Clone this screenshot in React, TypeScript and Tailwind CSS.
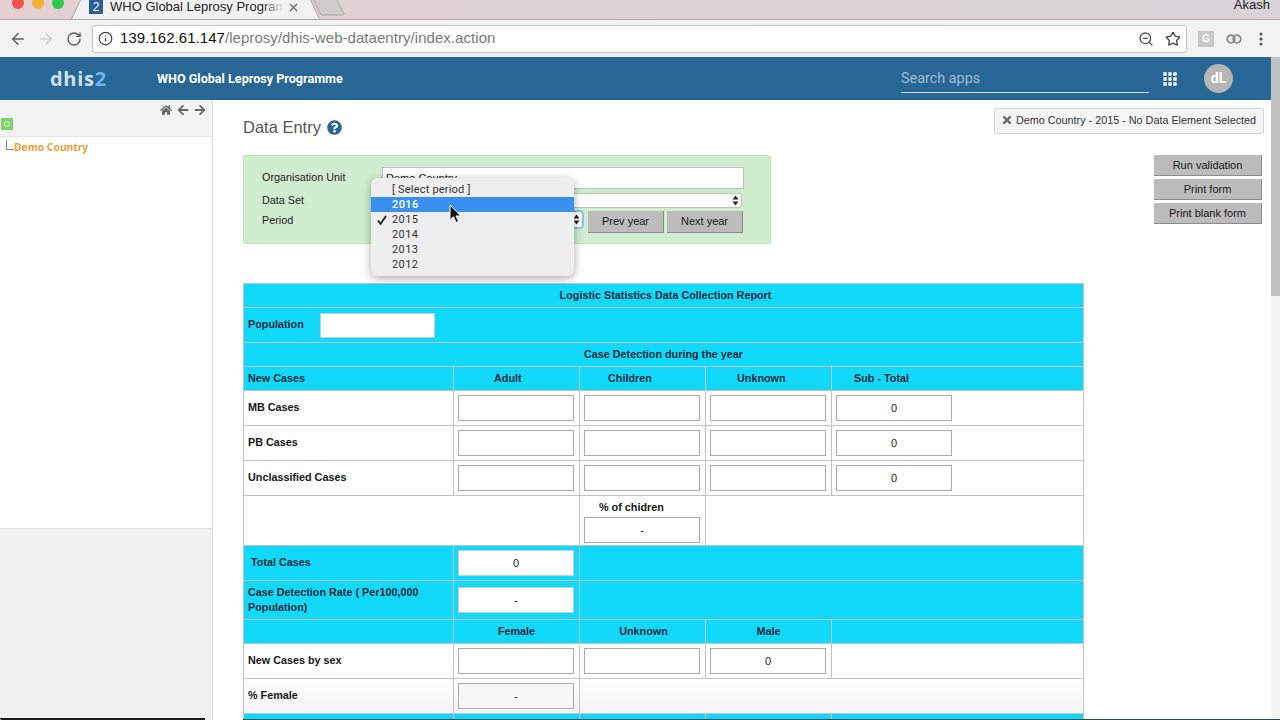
import { ArrowLeft, ArrowRight, Info, RotateCw, Star, X, ZoomOut } from "lucide-react";
import { FaArrowLeft, FaArrowRight, FaHome, FaQuestionCircle, FaTimes } from "react-icons/fa";
import { MdApps } from "react-icons/md";

const cyan = "bg-[#12d9fa]";
const cell = "border border-[#bfc4c6] px-[4px] py-0";
const head = "text-center text-[#0d2a3a]";
// the 35px rows sit their label one pixel above the middle
const rowLabel = "pb-[2px]";

const Field = ({ value = "", onCyan = false }: { value?: string; onCyan?: boolean }) => (
  <input
    readOnly
    value={value}
    className={`block h-[26px] w-[116px] border bg-white text-center text-[11px] font-normal text-[#222] outline-none ${
      onCyan ? "border-[#c4cdd0]" : "border-[#aaaaaa]"
    }`}
  />
);

const CaseRow = ({ label }: { label: string }) => (
  <tr className="h-[35px]">
    <td className={`${cell} ${rowLabel}`}>{label}</td>
    <td className={cell}><Field /></td>
    <td className={cell}><Field /></td>
    <td className={cell}><Field /></td>
    <td className={cell}><Field value="0" /></td>
  </tr>
);

const Updown = () => (
  <svg width="7" height="11" viewBox="0 0 7 11" className="shrink-0">
    <path d="M3.5 0.5 L6.5 4.5 H0.5 Z M3.5 10.5 L6.5 6.5 H0.5 Z" fill="#222" />
  </svg>
);

const GreyButton = ({ label, className }: { label: string; className: string }) => (
  <button className={`border-r border-b border-[#8c8c8c] bg-[#bcbcbc] text-[11px] text-[#1a1a1a] ${className}`}>
    {label}
  </button>
);

const years = ["2015", "2014", "2013", "2012"];

function BrowserChrome() {
  return (
    <div className="shrink-0 font-['Liberation_Sans',sans-serif]">
      <div className="relative h-[20px] overflow-hidden border-b border-[#b0a9ab] bg-gradient-to-r from-[#e3cfd1] via-[#ddd2d4] to-[#d8d4d7]">
        <div className="flex items-start gap-[8px] pl-[12px] -mt-[3px]">
          <span className="h-[12px] w-[12px] rounded-full bg-[#f4504c]" />
          <span className="h-[12px] w-[12px] rounded-full bg-[#f6b13a]" />
          <span className="h-[12px] w-[12px] rounded-full bg-[#2fc84a]" />
        </div>
        <svg width="290" height="20" viewBox="0 0 290 20" className="absolute left-[70px] top-0">
          <path d="M243 -1 H266 L274 13.5 Q274.5 15 272 15 H251 Z" fill="#d0cccd" stroke="#a9a5a7" />
          <path d="M1 20 L11 -1 H240 L250 20 Z" fill="#f2f2f2" />
          <path d="M1 20 L11 -1 M240 -1 L250 20" fill="none" stroke="#aaa5a7" />
        </svg>
        <div className="absolute left-[89px] top-0 flex h-[14px] items-center">
          <span className="flex h-[14px] w-[14px] items-center justify-center bg-[#2a5f95] text-[12px] text-white">2</span>
          <span className="relative ml-[7px] w-[174px] overflow-hidden whitespace-nowrap text-[13px] leading-[14px] text-[#222]">
            WHO Global Leprosy Programme
            <span className="absolute right-0 top-0 h-[14px] w-[22px] bg-gradient-to-r from-transparent to-[#f2f2f2]" />
          </span>
          <X size={13} strokeWidth={2.4} className="ml-[3px] text-[#666]" />
        </div>
        <span className="absolute right-[10px] -top-[5px] text-[13px] text-[#222]">Akash</span>
      </div>
      <div className="flex h-[37px] items-center bg-[#f2f2f2]">
        <ArrowLeft size={18} className="ml-[9px] text-[#5f5f5f]" />
        <ArrowRight size={18} className="ml-[10px] text-[#cfcfcf]" />
        <RotateCw size={16} className="ml-[11px] text-[#5f5f5f]" />
        <div className="ml-[10px] flex h-[28px] w-[1095px] items-center rounded-[3px] border border-[#c6c6c6] bg-white">
          <Info size={15} className="ml-[5px] text-[#444]" />
          <span className="ml-[7px] text-[15px] tracking-[0.05px] text-[#111]">
            139.162.61.147<span className="text-[#7a7a7a]">/leprosy/dhis-web-dataentry/index.action</span>
          </span>
          <ZoomOut size={16} className="ml-auto text-[#555]" />
          <Star size={16} className="ml-[11px] mr-[5px] text-[#444]" />
        </div>
        <span className="ml-[11px] flex h-[16px] w-[16px] items-center justify-center bg-[#c9c9c9] text-[10px] font-bold text-white">G</span>
        <svg width="16" height="10" viewBox="0 0 16 10" className="ml-[12px]">
          <circle cx="5" cy="5" r="3.8" fill="none" stroke="#8a8a8a" strokeWidth="1.8" />
          <circle cx="11" cy="5" r="3.8" fill="none" stroke="#8a8a8a" strokeWidth="1.8" />
        </svg>
        <svg width="4" height="14" viewBox="0 0 4 14" className="ml-[17px]">
          <circle cx="2" cy="2" r="1.5" fill="#555" />
          <circle cx="2" cy="7" r="1.5" fill="#555" />
          <circle cx="2" cy="12" r="1.5" fill="#555" />
        </svg>
      </div>
    </div>
  );
}

function TopBar() {
  return (
    <div className="flex h-[43px] items-center bg-[#276695] font-['Roboto',sans-serif]">
      <span className="ml-[50px] w-[107px] font-['Open_Sans',sans-serif] text-[20px] font-bold tracking-[0.7px] text-[#cfe0ec]">
        dhis<span className="text-[#6fb4e8]">2</span>
      </span>
      <span className="pt-[1px] text-[12.6px] font-bold text-white">WHO Global Leprosy Programme</span>
      <div className="ml-auto flex h-[29px] w-[248px] items-center border-b border-[#c9dbe8] pt-[2px] text-[14.4px] text-[#9dbdd6]">
        Search apps
      </div>
      <MdApps size={20} className="ml-[11px] text-white" />
      <span className="ml-[24px] mr-[38px] flex h-[29px] w-[29px] items-center justify-center rounded-full bg-[#b5b5b5] text-[14px] font-bold text-white">
        dL
      </span>
    </div>
  );
}

function Sidebar() {
  return (
    <aside className="flex w-[213px] shrink-0 flex-col border-r border-[#dcdcdc] bg-white">
      <div className="h-[37px] border-b border-[#e4e4e4] bg-[#f3f3f3]">
        <div className="flex justify-end gap-[5px] pr-[6px] pt-[4px] text-[#666]">
          <FaHome size={12} />
          <FaArrowLeft size={12} />
          <FaArrowRight size={12} />
        </div>
        <span className="ml-[1px] mt-[2px] flex h-[12px] w-[12px] items-center justify-center bg-[#7fd16a]">
          <span className="h-[6px] w-[6px] rounded-full border border-[#d8f5cf]" />
        </span>
      </div>
      <div className="flex h-[391px] items-start pl-[6px] pt-[3px]">
        <span className="h-[10px] w-[8px] border-b border-l border-[#888]" />
        <span className="text-[10.3px] font-bold leading-[14px] text-[#eda13c]">Demo Country</span>
      </div>
      <div className="flex-1 border-t border-[#e2e2e2] bg-[#f1f1f1]" />
    </aside>
  );
}

function DataForm() {
  return (
    <div className="mt-[18px] h-[89px] w-[528px] rounded-[2px] border border-[#bfe3bf] bg-[#d0edcf] pl-[18px] pt-[11px] text-[10.8px] text-[#1c1c1c]">
      <div className="flex h-[22px] items-center">
        <span className="w-[120px] pb-[2px]">Organisation Unit</span>
        <div className="flex h-[22px] w-[362px] items-center border border-[#bdbdbd] bg-white pl-[3px] text-[11px]">Demo Country</div>
      </div>
      <div className="mt-[4px] flex h-[15px] items-center">
        <span className="w-[120px]">Data Set</span>
        <div className="flex h-[15px] w-[360px] items-center justify-end rounded-[3px] border border-[#c4c4c4] bg-white pr-[2px]">
          <Updown />
        </div>
      </div>
      <div className="mt-[3px] flex items-start">
        <span className="w-[120px] pt-[1px]">Period</span>
        <div className="flex h-[17px] w-[201px] items-center justify-end rounded-[3px] border border-[#7fb2e4] bg-white pr-[2px] ring-1 ring-[#9cc6ee]">
          <Updown />
        </div>
        <GreyButton label="Prev year" className="ml-[5px] h-[22px] w-[76px]" />
        <GreyButton label="Next year" className="ml-[3px] h-[22px] w-[76px]" />
      </div>
    </div>
  );
}

function PeriodMenu() {
  return (
    <div className="absolute left-[158px] top-[78px] h-[98px] w-[203px] rounded-[6px] bg-[#eeeeee] pt-[4px] font-['Roboto',sans-serif] text-[11px] tracking-[0.2px] text-[#333] shadow-[0_2px_8px_rgba(0,0,0,0.35)]">
      <div className="flex h-[15px] items-center pl-[21px] pt-[1px]">[ Select period ]</div>
      <div className="flex h-[15px] items-center bg-[#3a90ee] pl-[21px] pt-[1px] font-medium tracking-[0.4px] text-white">2016</div>
      {years.map((y) => (
        <div key={y} className="relative flex h-[15px] items-center pl-[21px] pt-[1px] tracking-[0.4px]">
          {y === "2015" && (
            <svg width="10" height="10" viewBox="0 0 10 10" className="absolute left-[6px] top-[3px]">
              <path d="M1 5.5 L3.5 9 L9 1" fill="none" stroke="#222" strokeWidth="1.8" />
            </svg>
          )}
          {y}
        </div>
      ))}
      <svg width="13" height="20" viewBox="0 0 13 20" className="absolute left-[78px] top-[26px]">
        <path d="M1 1 V16 L4.5 12.8 L7 18.5 L9.6 17.3 L7.1 12 H11.8 Z" fill="#111" stroke="#fff" strokeWidth="1" />
      </svg>
    </div>
  );
}

function ReportTable() {
  return (
    <table className="w-[840px] table-fixed border-collapse font-['Liberation_Sans',sans-serif] text-[10.8px] font-bold text-[#151515]">
      <colgroup>
        <col className="w-[210px]" />
        <col className="w-[126px]" />
        <col className="w-[126px]" />
        <col className="w-[126px]" />
        <col className="w-[252px]" />
      </colgroup>
      <tbody>
        <tr className={`h-[24px] ${cyan}`}>
          <td colSpan={5} className={`${cell} ${head} pl-[8px]`}>Logistic Statistics Data Collection Report</td>
        </tr>
        <tr className={`h-[35px] ${cyan}`}>
          <td colSpan={5} className={`${cell} text-[#0d2a3a]`}>
            <div className="flex items-center">
              <span className="w-[72px] pb-[2px]">Population</span>
              <input readOnly className="block h-[25px] w-[115px] border border-[#c4cdd0] bg-white outline-none" />
            </div>
          </td>
        </tr>
        <tr className={`h-[24px] ${cyan}`}>
          <td colSpan={5} className={`${cell} ${head}`}>Case Detection during the year</td>
        </tr>
        <tr className={`h-[24px] ${cyan} text-[#0d2a3a]`}>
          <td className={cell}>New Cases</td>
          <td className={`${cell} pl-[40px]`}>Adult</td>
          <td className={`${cell} pl-[28px]`}>Children</td>
          <td className={`${cell} pl-[31px]`}>Unknown</td>
          <td className={`${cell} pl-[22px]`}>Sub - Total</td>
        </tr>
        <CaseRow label="MB Cases" />
        <CaseRow label="PB Cases" />
        <CaseRow label="Unclassified Cases" />
        <tr className="h-[50px]">
          <td colSpan={2} className={cell} />
          <td className={`${cell} align-top`}>
            <div className="pl-[15px] pt-[4px] leading-[14px]">% of chidren</div>
            <div className="mt-[3px]"><Field value="-" /></div>
          </td>
          <td colSpan={2} className={cell} />
        </tr>
        <tr className={`h-[35px] ${cyan} text-[#0d2a3a]`}>
          <td className={`${cell} ${rowLabel} pl-[7px]`}>Total Cases</td>
          <td className={cell}><Field value="0" onCyan /></td>
          <td colSpan={3} className={cell} />
        </tr>
        <tr className={`h-[39px] ${cyan} text-[#0d2a3a]`}>
          <td className={`${cell} leading-[15px]`}>Case Detection Rate ( Per100,000 Population)</td>
          <td className={cell}><Field value="-" onCyan /></td>
          <td colSpan={3} className={cell} />
        </tr>
        <tr className={`h-[24px] ${cyan}`}>
          <td className={cell} />
          <td className={`${cell} ${head}`}>Female</td>
          <td className={`${cell} ${head} pl-[6px]`}>Unknown</td>
          <td className={`${cell} ${head}`}>Male</td>
          <td className={cell} />
        </tr>
        <tr className="h-[35px]">
          <td className={`${cell} ${rowLabel}`}>New Cases by sex</td>
          <td className={cell}><Field /></td>
          <td className={cell}><Field /></td>
          <td className={cell}><Field value="0" /></td>
          <td className={cell} />
        </tr>
        <tr className="h-[35px] bg-gradient-to-b from-white to-[#f3f3f3]">
          <td className={`${cell} ${rowLabel}`}>% Female</td>
          <td className={cell}>
            <input readOnly value="-" className="block h-[26px] w-[116px] border border-[#aaaaaa] bg-[#f7f7f7] text-center text-[11px] font-normal outline-none" />
          </td>
          <td colSpan={3} className={cell} />
        </tr>
        <tr className={`h-[24px] ${cyan}`}>
          <td className={cell} />
          <td className={cell} />
          <td className={cell} />
          <td className={cell} />
          <td className={cell} />
        </tr>
      </tbody>
    </table>
  );
}

export default function App() {
  return (
    <div className="relative flex h-[720px] w-[1280px] flex-col overflow-hidden bg-white">
      <BrowserChrome />
      <div className="flex min-h-0 flex-1">
        <div className="flex min-w-0 flex-1 flex-col">
          <TopBar />
          <div className="flex min-h-0 flex-1">
            <Sidebar />
            <main className="relative min-w-0 flex-1 overflow-hidden font-['Liberation_Sans',sans-serif]">
              <div className="flex h-[183px]">
                <div className="pl-[30px] pt-[17px]">
                  <h1 className="flex h-[20px] items-center text-[16.5px] font-normal text-[#555]">
                    Data Entry
                    <FaQuestionCircle size={15} className="ml-[6px] text-[#276695]" />
                  </h1>
                  <DataForm />
                </div>
                <div className="ml-auto flex flex-col items-end pr-[7px] pt-[8px]">
                  <div className="flex h-[26px] w-[270px] items-center rounded-[2px] border border-[#d5d5d5] bg-[#f5f5f5] pb-[2px] pl-[6px] text-[10.8px] text-[#333]">
                    <FaTimes size={12} className="mr-[3px] text-[#666]" />
                    Demo Country - 2015 - No Data Element Selected
                  </div>
                  <div className="mr-[2px] mt-[21px] flex flex-col gap-[3px]">
                    <GreyButton label="Run validation" className="h-[21px] w-[108px]" />
                    <GreyButton label="Print form" className="h-[21px] w-[108px]" />
                    <GreyButton label="Print blank form" className="h-[21px] w-[108px]" />
                  </div>
                </div>
              </div>
              <div className="pl-[30px]">
                <ReportTable />
              </div>
              <PeriodMenu />
            </main>
          </div>
        </div>
        <div className="w-[9px] shrink-0 bg-[#f4f4f4]">
          <div className="h-[239px] bg-[#c2c2c2]" />
        </div>
      </div>
      {/* window edge of the recording, dark along the bottom left */}
      <div className="absolute bottom-0 left-0 h-[2px] w-[205px] rounded-bl-[4px] bg-[#1c1c1c]" />
      <div className="absolute bottom-0 left-[243px] h-[1px] w-[1037px] bg-[#2a4a52]" />
    </div>
  );
}
